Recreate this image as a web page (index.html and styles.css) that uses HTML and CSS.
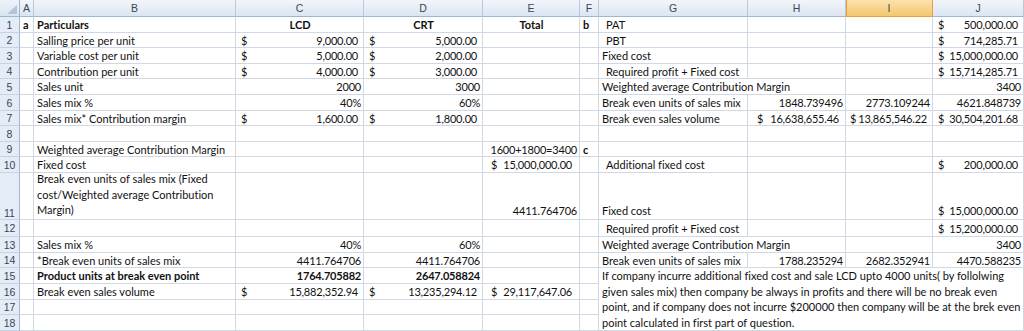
FILE: index.html
```html
<!DOCTYPE html>
<html>
<head>
<meta charset="utf-8">
<title>Sheet</title>
<link rel="stylesheet" href="styles.css">
</head>
<body>
<div class="sheet">
  <!-- header row -->
  <div class="corner"><svg width="12" height="11" viewBox="0 0 12 11"><polygon points="11,1 11,10 1,10" fill="#B5C4D8"/></svg></div>
  <div class="ch">A</div><div class="ch">B</div><div class="ch">C</div><div class="ch">D</div><div class="ch">E</div><div class="ch">F</div><div class="ch">G</div><div class="ch">H</div><div class="ch sel">I</div><div class="ch">J</div>

  <!-- 1 -->
  <div class="rh">1</div><div class="c b">a</div><div class="c b">Particulars</div><div class="c b ctr">LCD</div><div class="c b ctr">CRT</div><div class="c b ctr">Total</div><div class="c b">b</div><div class="c ind">PAT</div><div class="c"></div><div class="c"></div><div class="c acc"><span>$</span><span>500,000.00</span></div>
  <!-- 2 -->
  <div class="rh">2</div><div class="c"></div><div class="c">Salling price per unit</div><div class="c acc"><span>$</span><span>9,000.00</span></div><div class="c acc"><span>$</span><span>5,000.00</span></div><div class="c"></div><div class="c"></div><div class="c ind">PBT</div><div class="c"></div><div class="c"></div><div class="c acc"><span>$</span><span>714,285.71</span></div>
  <!-- 3 -->
  <div class="rh">3</div><div class="c"></div><div class="c">Variable cost per unit</div><div class="c acc"><span>$</span><span>5,000.00</span></div><div class="c acc"><span>$</span><span>2,000.00</span></div><div class="c"></div><div class="c"></div><div class="c">Fixed cost</div><div class="c"></div><div class="c"></div><div class="c acc"><span>$</span><span>15,000,000.00</span></div>
  <!-- 4 -->
  <div class="rh">4</div><div class="c"></div><div class="c">Contribution per unit</div><div class="c acc"><span>$</span><span>4,000.00</span></div><div class="c acc"><span>$</span><span>3,000.00</span></div><div class="c"></div><div class="c"></div><div class="c ind">Required profit + Fixed cost</div><div class="c"></div><div class="c"></div><div class="c acc"><span>$</span><span>15,714,285.71</span></div>
  <!-- 5 -->
  <div class="rh">5</div><div class="c"></div><div class="c">Sales unit</div><div class="c r">2000</div><div class="c r">3000</div><div class="c"></div><div class="c"></div><div class="c span2">Weighted average Contribution Margin</div><div class="c"></div><div class="c r">3400</div>
  <!-- 6 -->
  <div class="rh">6</div><div class="c"></div><div class="c">Sales mix %</div><div class="c r">40%</div><div class="c r">60%</div><div class="c"></div><div class="c"></div><div class="c">Break even units of sales mix</div><div class="c r">1848.739496</div><div class="c r">2773.109244</div><div class="c r">4621.848739</div>
  <!-- 7 -->
  <div class="rh">7</div><div class="c"></div><div class="c">Sales mix* Contribution margin</div><div class="c acc"><span>$</span><span>1,600.00</span></div><div class="c acc"><span>$</span><span>1,800.00</span></div><div class="c"></div><div class="c"></div><div class="c">Break even sales volume</div><div class="c acc acc-h"><span>$</span><span>16,638,655.46</span></div><div class="c acc acc-i"><span>$</span><span>13,865,546.22</span></div><div class="c acc"><span>$</span><span>30,504,201.68</span></div>
  <!-- 8 -->
  <div class="rh">8</div><div class="c"></div><div class="c"></div><div class="c"></div><div class="c"></div><div class="c"></div><div class="c"></div><div class="c"></div><div class="c"></div><div class="c"></div><div class="c"></div>
  <!-- 9 -->
  <div class="rh">9</div><div class="c"></div><div class="c">Weighted average Contribution Margin</div><div class="c"></div><div class="c"></div><div class="c r">1600+1800=3400</div><div class="c b">c</div><div class="c"></div><div class="c"></div><div class="c"></div><div class="c"></div>
  <!-- 10 -->
  <div class="rh">10</div><div class="c"></div><div class="c">Fixed cost</div><div class="c"></div><div class="c"></div><div class="c acc acc-e"><span>$</span><span>15,000,000.00</span></div><div class="c"></div><div class="c ind">Additional fixed cost</div><div class="c"></div><div class="c"></div><div class="c acc"><span>$</span><span>200,000.00</span></div>
  <!-- 11 -->
  <div class="rh bot">11</div><div class="c bot"></div><div class="c bot wrap">Break even units of sales mix (Fixed<br>cost/Weighted average Contribution<br>Margin)</div><div class="c bot"></div><div class="c bot"></div><div class="c bot r">4411.764706</div><div class="c bot"></div><div class="c bot">Fixed cost</div><div class="c bot"></div><div class="c bot"></div><div class="c bot acc"><span>$</span><span>15,000,000.00</span></div>
  <!-- 12 -->
  <div class="rh">12</div><div class="c"></div><div class="c"></div><div class="c"></div><div class="c"></div><div class="c"></div><div class="c"></div><div class="c ind">Required profit + Fixed cost</div><div class="c"></div><div class="c"></div><div class="c acc"><span>$</span><span>15,200,000.00</span></div>
  <!-- 13 -->
  <div class="rh">13</div><div class="c"></div><div class="c">Sales mix %</div><div class="c r">40%</div><div class="c r">60%</div><div class="c"></div><div class="c"></div><div class="c span2">Weighted average Contribution Margin</div><div class="c"></div><div class="c r">3400</div>
  <!-- 14 -->
  <div class="rh">14</div><div class="c"></div><div class="c">*Break even units of sales mix</div><div class="c r">4411.764706</div><div class="c r">4411.764706</div><div class="c"></div><div class="c"></div><div class="c">Break even units of sales mix</div><div class="c r">1788.235294</div><div class="c r">2682.352941</div><div class="c r">4470.588235</div>
  <!-- 15 -->
  <div class="rh">15</div><div class="c"></div><div class="c b">Product units at break even point</div><div class="c b r">1764.705882</div><div class="c b r">2647.058824</div><div class="c"></div><div class="c"></div>
  <div class="c merged">If company incurre additional fixed cost and sale LCD upto 4000 units( by follolwing<br>given sales mix) then company be always in profits and there will be no break even<br>point, and if company does not incurre $200000 then company will be at the brek even<br>point calculated in first part of question.</div>
  <!-- 16 -->
  <div class="rh">16</div><div class="c"></div><div class="c">Break even sales volume</div><div class="c acc"><span>$</span><span>15,882,352.94</span></div><div class="c acc"><span>$</span><span>13,235,294.12</span></div><div class="c acc acc-e"><span>$</span><span>29,117,647.06</span></div><div class="c"></div>
  <!-- 17 -->
  <div class="rh">17</div><div class="c"></div><div class="c"></div><div class="c"></div><div class="c"></div><div class="c"></div><div class="c"></div>
  <!-- 18 -->
  <div class="rh">18</div><div class="c"></div><div class="c"></div><div class="c"></div><div class="c"></div><div class="c"></div><div class="c"></div>
</div>
</body>
</html>
```
FILE: styles.css
```css
html, body {
  margin: 0;
  padding: 0;
  background: #fff;
  overflow: hidden;
}
.sheet {
  display: grid;
  grid-template-columns: 20px 14px 202px 128px 119px 97px 19px 149px 98px 87px 91px;
  grid-template-rows: 17px 16px 15px 16px 15px 16px 16px 15px 16px 15px 16px 47px 17px 16px 15px 16px 16px 15px 16px;
  font-family: "Lato", "Liberation Sans", sans-serif;
  font-size: 11px;
  font-variant-ligatures: none;
  color: #111;
  width: 1024px;
  height: 331px;
}
.sheet > div {
  box-sizing: border-box;
  min-width: 0;
  overflow: hidden;
  white-space: nowrap;
}
.corner {
  background: linear-gradient(#EEF3FA, #DAE4F1);
  border-right: 1px solid #9EB6CE;
  border-bottom: 1px solid #9EB6CE;
  display: flex;
  align-items: flex-end;
  justify-content: flex-end;
  padding: 0 1px 1px 0;
}
.corner svg { display: block; }
.ch {
  background: linear-gradient(#F2F6FB, #DCE5F2);
  border-right: 1px solid #B9C9DD;
  border-bottom: 1px solid #9EB6CE;
  display: flex;
  align-items: center;
  justify-content: center;
  color: #3B4656;
  font-family: "Liberation Sans", sans-serif;
  font-size: 10.5px;
}
.ch.sel {
  background: linear-gradient(#FBE2AE, #F3C76C);
  border-right: 1px solid #F29A3E;
  border-bottom: 1px solid #F29A3E;
  box-shadow: inset 1px 0 0 #F29A3E;
}
.rh {
  background: #E4ECF7;
  border-right: 1px solid #9EB6CE;
  border-bottom: 1px solid #C5D3E4;
  display: flex;
  align-items: center;
  justify-content: center;
  color: #3B4656;
  font-family: "Liberation Sans", sans-serif;
  font-size: 10.5px;
}
.c {
  border-right: 1px solid #D0D7E5;
  border-bottom: 1px solid #D0D7E5;
  display: flex;
  align-items: center;
  padding: 0 2px 0 3px;
  line-height: 15px;
}
.b { font-weight: 700; }
.ctr { justify-content: center; }
.r {
  justify-content: flex-end;
  letter-spacing: -0.2px;
  padding-right: 2px;
}
.ind { padding-left: 7px; }
.acc {
  justify-content: space-between;
  padding: 0 5px 0 5px;
}
.acc span:last-child { letter-spacing: -0.2px; }
.acc-e { padding: 0 7px 0 8px; }
.acc-h { padding: 0 6px 0 9px; }
.acc-i { padding: 0 5px 0 4px; }
.span2 { grid-column: span 2; }
.bot { align-items: flex-end; padding-bottom: 1px; }
.rh.bot { padding-bottom: 0; }
.wrap { line-height: 15.6px; }
.merged {
  grid-column: span 4;
  grid-row: span 4;
  align-items: flex-start;
  line-height: 15.6px;
  padding-top: 0;
}
```
